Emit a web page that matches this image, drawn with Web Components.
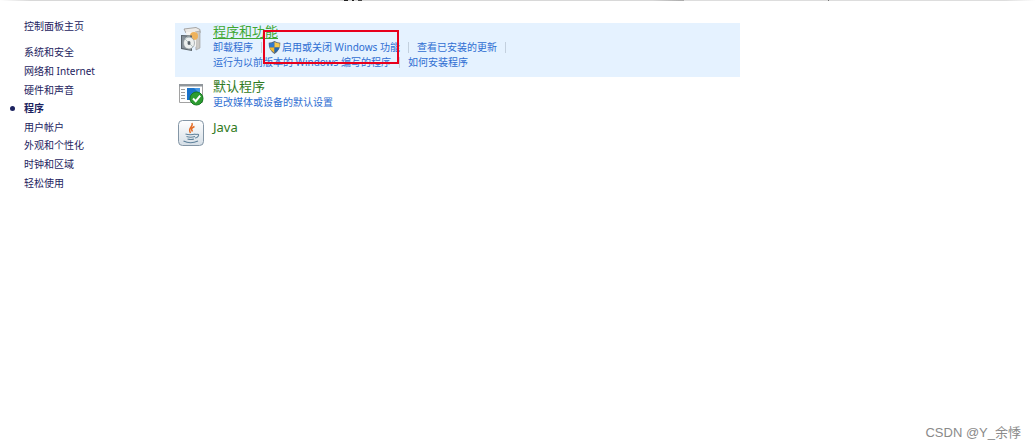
<!DOCTYPE html>
<html lang="zh-CN">
<head>
<meta charset="utf-8">
<title>程序</title>
<style>
body { margin: 0; background: #fff; font-family: "Noto Sans", "Noto Sans CJK SC", sans-serif; }
</style>
</head>
<body>
<control-panel></control-panel>

<template id="t-panel">
<style>
:host { display: flex; flex-direction: column; min-height: 100vh; }
.edge { height: 1px; background:
  linear-gradient(#222, #222) 344px 0 / 4px 1px no-repeat,
  linear-gradient(#222, #222) 352px 0 / 2px 1px no-repeat,
  linear-gradient(#444, #444) 358px 0 / 4px 1px no-repeat,
  linear-gradient(#777, #777) 80% 0 / 1px 1px no-repeat,
  linear-gradient(90deg, #fff, #d8d8d8 3%, #d8d8d8 63%, #aaa 66%, #ddd 66%, #ddd 97%, #fff); }
.body { display: grid; grid-template-columns: 175px minmax(0, 565px); flex: 1; }
main { padding-top: 22px; }
footer { align-self: flex-end; padding: 0 15px 6px 0; font: 13px/18px "Liberation Sans", "Noto Sans CJK SC", sans-serif; color: #8a8a8a; }
</style>
<div class="edge"></div>
<div class="body">
  <side-nav></side-nav>
  <main>
    <program-group heading="程序和功能" active>
      <app-icon slot="icon" name="programs"></app-icon>
      <link-row trailing>
        <task-link>卸载程序</task-link>
        <task-link shield>启用或关闭 Windows 功能</task-link>
        <task-link>查看已安装的更新</task-link>
      </link-row>
      <link-row>
        <task-link>运行为以前版本的 Windows 编写的程序</task-link>
        <task-link>如何安装程序</task-link>
      </link-row>
    </program-group>
    <program-group heading="默认程序">
      <app-icon slot="icon" name="defaults"></app-icon>
      <link-row><task-link>更改媒体或设备的默认设置</task-link></link-row>
    </program-group>
    <program-group heading="Java">
      <app-icon slot="icon" name="java"></app-icon>
    </program-group>
  </main>
</div>
<footer>CSDN @Y_余悸</footer>
</template>

<template id="t-nav">
<style>
:host { display: block; padding: 17px 0 0 24px; font-size: 10px; line-height: 16px; }
a { color: #1d2360; text-decoration: none; white-space: nowrap; }
ul { list-style: none; margin: 9px 0 0; padding: 0; display: grid; grid-auto-rows: 1fr; height: 149px; align-items: center; }
li { position: relative; }
.on { font-weight: 600; }
.on::before { content: ""; position: absolute; left: -14px; top: 6px; width: 5px; height: 5px; border-radius: 50%; background: #1d2360; }
</style>
<nav>
  <a href="#home">控制面板主页</a>
  <ul>
    <li><a href="#system">系统和安全</a></li>
    <li><a href="#network">网络和 Internet</a></li>
    <li><a href="#hardware">硬件和声音</a></li>
    <li class="on"><a href="#programs" aria-current="page">程序</a></li>
    <li><a href="#users">用户帐户</a></li>
    <li><a href="#appearance">外观和个性化</a></li>
    <li><a href="#clock">时钟和区域</a></li>
    <li><a href="#access">轻松使用</a></li>
  </ul>
</nav>
</template>

<template id="t-group">
<style>
:host { display: grid; grid-template-columns: 32px 1fr; column-gap: 6px; padding-bottom: 8px; }
:host([active]) { background: #e5f2ff; padding-bottom: 7px; }
h2 { margin: 0; padding-top: 1px; font-size: 13px; line-height: 17px; font-weight: 400; }
:host([active]) h2 { padding-top: 0; }
h2 a { color: #2f7a22; text-decoration: none; }
:host([active]) h2 a { color: #3fa832; text-decoration: underline; text-underline-offset: 2px; }
</style>
<slot name="icon"></slot>
<div><h2><a href="#open"></a></h2><slot></slot></div>
</template>

<template id="t-row">
<style>
:host { display: flex; align-items: center; font-size: 10px; line-height: 15px; }
:host([trailing])::after { content: ""; width: 1px; height: 11px; margin-left: 8px; background: #c3d0de; }
</style>
<slot></slot>
</template>

<template id="t-link">
<style>
:host { display: flex; align-items: center; white-space: nowrap; }
:host(:not(:first-child))::before { content: ""; width: 1px; height: 11px; margin: 0 8px; background: #c3d0de; }
:host([shield]) { position: relative; }
:host([shield])::after { content: ""; position: absolute; box-sizing: border-box; left: 10px; right: 1px; top: -10px; height: 34px; border: 2px solid #e8001c; pointer-events: none; z-index: 1; }
:host([shield]:not(:first-child))::before { margin-right: 6px; }
a { color: #2f6ed2; text-decoration: none; }
svg { display: none; width: 13px; height: 13px; margin-right: 1px; }
:host([shield]) svg { display: block; }
</style>
<svg viewBox="0 0 13 13" aria-hidden="true">
<path d="M6.5 0Q9 1.7 12.3 1.8Q12.7 9 6.5 13Q.3 9 .7 1.8Q4 1.7 6.5 0" fill="#596879"/>
<path d="M6.5 1V6.5H1.4Q1.2 4.7 1.4 2.6Q4.2 2.4 6.5 1" fill="#3079cf"/>
<path d="M6.5 1Q8.8 2.4 11.6 2.6Q11.8 4.7 11.6 6.5H6.5" fill="#f6c84b"/>
<path d="M1.4 6.5H6.5V12Q2.3 9.5 1.4 6.5" fill="#f5b92d"/>
<path d="M6.5 6.5H11.6Q10.7 9.5 6.5 12" fill="#2367b4"/>
</svg>
<a href="#task"><slot></slot></a>
</template>

<template id="i-programs">
<svg width="32" height="32" viewBox="0 0 32 32">
<path d="M9 6L21 4.500L25 6.500V10L23 9.500L11 10Z" fill="#eceae7" stroke="#95928e" stroke-width=".8"/>
<path d="M20 9L25 8V25L21 27Z" fill="#cbc9c5" stroke="#999" stroke-width=".6"/>
<path d="M11 9H21V24L12 20Z" fill="#f5f4f1"/>
<circle cx="19" cy="13" r="4" fill="#eeb25b"/>
<path d="M6 12L17 12.500V28L6 26Z" fill="#59636a"/>
<path d="M7 13L16 14V27L7 25Z" fill="#87919a"/>
<ellipse cx="14" cy="20" rx="5.500" ry="6" fill="#edf0ef" stroke="#8f999d" stroke-width=".7"/>
<path d="M14 20L10 16Q12 13 15 14M14 20L18 24" fill="none" stroke="#b8c5c4"/>
<ellipse cx="14" cy="20" rx="1.500" ry="2" fill="#59636a"/>
</svg>
</template>

<template id="i-defaults">
<svg width="32" height="32" viewBox="0 0 32 32">
<path d="M4.500 7.500H27.500V25.500H4.500Z" fill="#fff" stroke="#a2a2a2"/>
<path d="M4 7H28V9.500H4Z" fill="#90969b"/>
<path d="M12 11H25V23H12Z" fill="#1a73cb"/>
<path d="M19 11L25 17V11Z" fill="#4497e4"/>
<path d="M6 12.500H10M6 15.500H10M6 18.500H10M6 21.500H10" stroke="#9d9d9d"/>
<circle cx="21.500" cy="21.500" r="6.500" fill="#2d9c31" stroke="#157a20"/>
<path d="M18 21.500L20.700 24.200L25.200 18.700" fill="none" stroke="#fff" stroke-width="2"/>
</svg>
</template>

<template id="i-java">
<svg width="32" height="32" viewBox="0 0 32 32">
<defs><linearGradient id="g" x2="0" y2="1"><stop stop-color="#fff"/><stop offset="1" stop-color="#d5dee6"/></linearGradient></defs>
<rect x="3.500" y="2.500" width="25" height="25" rx="4" fill="url(#g)" stroke="#8496a6"/>
<path d="M17 5C19 9 12 9.500 15.500 15M19.500 8.500C16 10 16 11.500 17.500 13.500" fill="none" stroke="#e36b25" stroke-width="1.500"/>
<path d="M10.500 16Q15 17.500 20.500 16M11.500 18.500Q15.500 20 20 18.500M12.500 21Q16 22 19 21M8.500 23Q15.500 26.500 23 23M20.500 16.500Q25 15.500 23 18.500Q22 20 20 20" fill="none" stroke="#5f829b" stroke-width="1.200"/>
</svg>
</template>

<script>
const stamp = (host, id) => {
  const root = host.attachShadow({ mode: "open" });
  root.append(document.getElementById(id).content.cloneNode(true));
  return root;
};
customElements.define("app-icon", class extends HTMLElement {
  connectedCallback() {
    if (this.shadowRoot) return;
    const root = stamp(this, "i-" + this.getAttribute("name"));
    const style = document.createElement("style");
    style.textContent = ":host { display: block; height: 32px; } svg { display: block; }";
    root.prepend(style);
  }
});
customElements.define("task-link", class extends HTMLElement {
  constructor() { super(); stamp(this, "t-link"); }
});
customElements.define("link-row", class extends HTMLElement {
  constructor() { super(); stamp(this, "t-row"); }
});
customElements.define("program-group", class extends HTMLElement {
  connectedCallback() {
    if (this.shadowRoot) return;
    stamp(this, "t-group").querySelector("a").textContent = this.getAttribute("heading");
  }
});
customElements.define("side-nav", class extends HTMLElement {
  constructor() { super(); stamp(this, "t-nav"); }
});
customElements.define("control-panel", class extends HTMLElement {
  constructor() { super(); stamp(this, "t-panel"); }
});
</script>
</body>
</html>
